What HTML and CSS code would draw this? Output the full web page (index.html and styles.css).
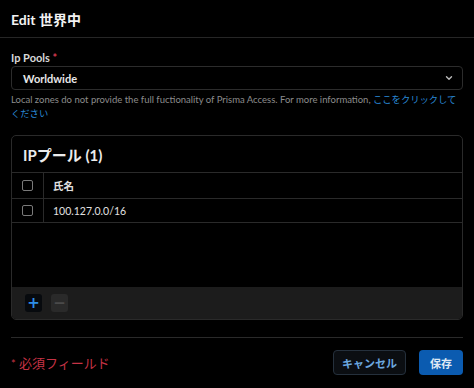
FILE: index.html
```html
<!DOCTYPE html>
<html lang="ja">
<head>
    <meta charset="UTF-8">
    <title>Edit 世界中</title>
    <link rel="stylesheet" href="styles.css">
</head>
<body>
    <!-- Dialog header -->
    <div class="header">Edit 世界中</div>

    <div class="content">
        <label class="field-label">Ip Pools <span class="req">*</span></label>
        <div class="select">
            <span>Worldwide</span>
            <svg class="chevron" width="10" height="10" viewBox="0 0 10 10">
                <path d="M2.5 3.8 L5 6.3 L7.5 3.8" fill="none" stroke="#bbb" stroke-width="1.4" stroke-linecap="round" stroke-linejoin="round"/>
            </svg>
        </div>
        <p class="help">Local zones do not provide the full fuctionality of Prisma Access. For more information, <a href="#">ここをクリックして</a><br><a href="#">ください</a></p>

        <!-- IP pool table card -->
        <div class="card">
            <div class="card-title">IPプール (1)</div>
            <div class="row head">
                <div class="check-cell"><span class="box"></span></div>
                <div class="cell">氏名</div>
            </div>
            <div class="row">
                <div class="check-cell"><span class="box"></span></div>
                <div class="cell">100.127.0.0/16</div>
            </div>
            <div class="empty"></div>
            <div class="card-footer">
                <button class="icon-btn add">+</button>
                <button class="icon-btn remove">−</button>
            </div>
        </div>

        <div class="footer">
            <span class="required-note"><span class="star">*</span> 必須フィールド</span>
            <div class="actions">
                <button class="btn cancel">キャンセル</button>
                <button class="btn save">保存</button>
            </div>
        </div>
    </div>
</body>
</html>
```

FILE: styles.css
```css
body {
    margin: 0;
    background: #000;
    color: #e6e6e6;
    font-family: Lato, "Noto Sans CJK JP", sans-serif;
}

.header {
    height: 37px;
    display: flex;
    align-items: center;
    padding: 0 11px;
    border-bottom: 1px solid #262626;
    font-size: 14px;
    font-weight: bold;
    color: #f2f2f2;
}

.content {
    padding: 13px 11px 0;
}

.field-label {
    display: block;
    font-size: 11px;
    font-weight: bold;
    line-height: 14px;
    margin-bottom: 1px;
    color: #d8d8d8;
}
.req {
    color: #d23a4f;
}

.select {
    height: 22px;
    border: 1px solid #2c2c2c;
    border-radius: 4px;
    display: flex;
    align-items: center;
    justify-content: space-between;
    padding: 0 8px 0 11px;
    font-size: 11px;
    font-weight: bold;
    color: #e8e8e8;
}

.help {
    margin: 3px 0 0;
    font-size: 9.5px;
    line-height: 14px;
    color: #8c8c8c;
}
.help a {
    color: #2a8ad8;
    text-decoration: none;
    font-size: 9.3px;
}

/* Table card */
.card {
    margin-top: 14px;
    border: 1px solid #2a2a2a;
    border-radius: 5px;
    overflow: hidden;
}
.card-title {
    height: 36px;
    display: flex;
    align-items: center;
    padding: 0 11px;
    font-size: 15px;
    font-weight: bold;
    color: #ececec;
    border-bottom: 1px solid #2a2a2a;
}
.row {
    display: flex;
    height: 23px;
    border-bottom: 1px solid #2a2a2a;
    font-size: 10.5px;
}
.row.head {
    height: 25px;
    font-weight: bold;
}
.check-cell {
    width: 31px;
    border-right: 1px solid #2a2a2a;
    display: flex;
    align-items: center;
    justify-content: center;
}
.box {
    width: 9px;
    height: 9px;
    border: 1px solid #7a7a7a;
    border-radius: 2px;
}
.cell {
    display: flex;
    align-items: center;
    padding-left: 9px;
    color: #e0e0e0;
}
.empty {
    height: 64px;
}
.card-footer {
    height: 32px;
    background: #1c1c1c;
    display: flex;
    align-items: center;
    gap: 9px;
    padding: 0 13px;
}
.icon-btn {
    width: 17px;
    height: 18px;
    border: none;
    border-radius: 3px;
    padding: 0;
    font-family: "DejaVu Sans", sans-serif;
    font-size: 15px;
    font-weight: bold;
    line-height: 18px;
}
.icon-btn.add {
    background: #070a0e;
    color: #2e8ee6;
}
.icon-btn.remove {
    background: #2a2a2a;
    color: #4a4a4a;
}

/* Footer */
.footer {
    margin-top: 17px;
    border-top: 1px solid #2a2a2a;
    padding-top: 12px;
    display: flex;
    justify-content: space-between;
    align-items: center;
}
.required-note {
    color: #c63345;
    font-size: 13px;
}
.required-note .star {
    font-size: 11px;
}
.actions {
    display: flex;
    gap: 13px;
}
.btn {
    height: 25px;
    border-radius: 4px;
    font-family: Lato, "Noto Sans CJK JP", sans-serif;
    font-size: 11px;
    font-weight: bold;
    padding: 0;
    white-space: nowrap;
}
.btn.cancel {
    width: 73px;
    background: #0b0e12;
    border: 1px solid #25303c;
    color: #6ca8e0;
}
.btn.save {
    width: 44px;
    background: #0b5bb0;
    border: none;
    color: #dfe9f5;
}
```
